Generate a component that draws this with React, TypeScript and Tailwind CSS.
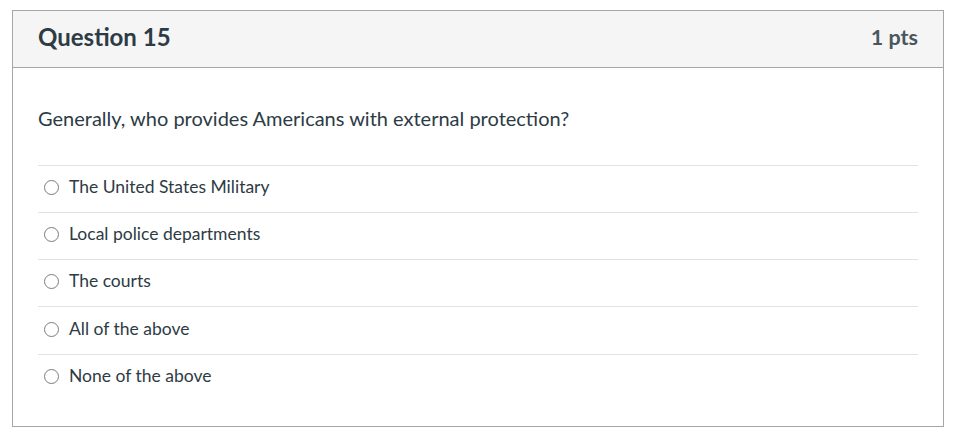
import React from "react";

const answers = [
  "The United States Military",
  "Local police departments",
  "The courts",
  "All of the above",
  "None of the above",
];

export default function App() {
  return (
    <div className="bg-white w-[953px] h-[440px] pt-[10px] pl-[12px]" style={{ fontFamily: "Lato, 'Noto Sans', sans-serif" }}>
      <div className="w-[932px] h-[417px] border border-[#a6a6a6] flex flex-col">
        <div className="h-[57px] bg-[#f5f5f5] border-b border-[#a6a6a6] flex items-center justify-between px-[25px] pb-[5px]">
          <span className="text-[24px] font-bold text-[#2d3b45]">Question 15</span>
          <span className="text-[21.5px] font-bold text-[#4a555d] pt-[2px]">1 pts</span>
        </div>
        <div className="px-[25px] pt-[36px]">
          <div className="text-[20px] leading-[28px] text-[#2d3b45]">
            Generally, who provides Americans with external protection?
          </div>
          <div className="mt-[33px]">
            {answers.map((a, i) => (
              <div key={a} className={`border-t border-[#e2e2e2] flex items-center pb-[3px] ${i === 3 ? "h-[48px]" : "h-[47px]"}`}>
                <span className="ml-[6px] w-[15px] h-[15px] rounded-full border-[1.5px] border-[#7b7b7b] bg-white"></span>
                <span className="ml-[10px] text-[17.5px] leading-[20px] text-[#2d3b45] -mt-[1px]">{a}</span>
              </div>
            ))}
          </div>
        </div>
      </div>
    </div>
  );
}
